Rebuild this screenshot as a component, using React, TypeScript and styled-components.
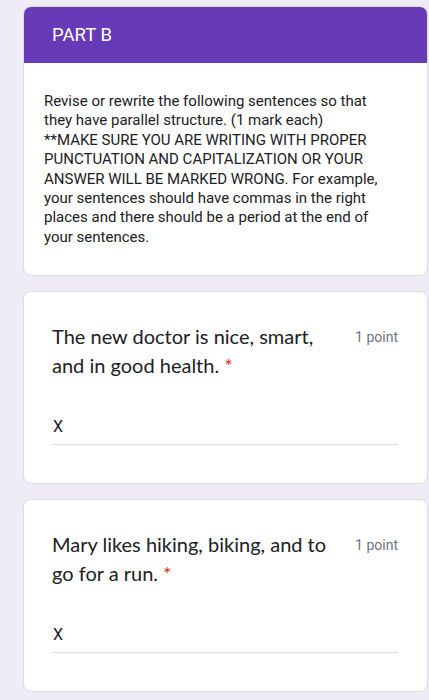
import React from 'react';
import styled, { createGlobalStyle } from 'styled-components';

const GlobalStyle = createGlobalStyle`
  html, body {
    margin: 0;
    padding: 0;
    background: #efebf7;
  }
  body {
    font-family: Roboto, "Liberation Sans", sans-serif;
  }
`;

const Page = styled.div`
  display: flex;
  flex-direction: column;
  gap: 15px;
  padding: 6px 1px 20px 23px;
  min-height: 700px;
  box-sizing: border-box;
`;

const Card = styled.div`
  background: #fff;
  border: 1px solid #dadce0;
  border-radius: 8px;
  overflow: hidden;
`;

const HeaderBar = styled.div`
  background: #673ab7;
  color: #fff;
  height: 57px;
  display: flex;
  align-items: center;
  padding-left: 29px;
  font-size: 18.5px;
  margin: -1px -1px 0 -1px;
`;

const Description = styled.div`
  padding: 29px 30px 28px 20px;
  font-size: 15px;
  line-height: 19.4px;
  color: #202124;
`;

const QuestionBody = styled.div`
  padding: 30px 29px 38px 28px;
`;

const TitleRow = styled.div`
  display: flex;
  align-items: flex-start;
  gap: 24px;
`;

const Title = styled.div`
  flex: 1;
  font-family: Lato, Roboto, sans-serif;
  font-size: 20px;
  line-height: 29px;
  color: #202124;
`;

const Required = styled.span`
  color: #d93025;
  margin-left: 5px;
`;

const Points = styled.div`
  font-size: 14px;
  color: #70757a;
  line-height: 31px;
  white-space: nowrap;
`;

const Answer = styled.div`
  margin-top: 35px;
  font-size: 16px;
  line-height: 24px;
  color: #202124;
  padding: 0 0 5px 1px;
  border-bottom: 1px solid #dadce0;
`;

const Question = ({ title, answer }: { title: string; answer: string }) => (
  <Card>
    <QuestionBody>
      <TitleRow>
        <Title>
          {title}
          <Required>*</Required>
        </Title>
        <Points>1 point</Points>
      </TitleRow>
      <Answer>{answer}</Answer>
    </QuestionBody>
  </Card>
);

const App = () => {
  return (
    <>
      <GlobalStyle />
      <Page>
        <Card>
          <HeaderBar>PART B</HeaderBar>
          <Description>
            Revise or rewrite the following sentences so that they have parallel structure. (1 mark each)
            <br />
            **MAKE SURE YOU ARE WRITING WITH PROPER PUNCTUATION AND CAPITALIZATION OR YOUR ANSWER WILL BE
            MARKED WRONG. For example, your sentences should have commas in the right places and there should
            be a period at the end of your sentences.
          </Description>
        </Card>
        <Question title="The new doctor is nice, smart, and in good health." answer="X" />
        <Question title="Mary likes hiking, biking, and to go for a run." answer="X" />
      </Page>
    </>
  );
};

export default App;
